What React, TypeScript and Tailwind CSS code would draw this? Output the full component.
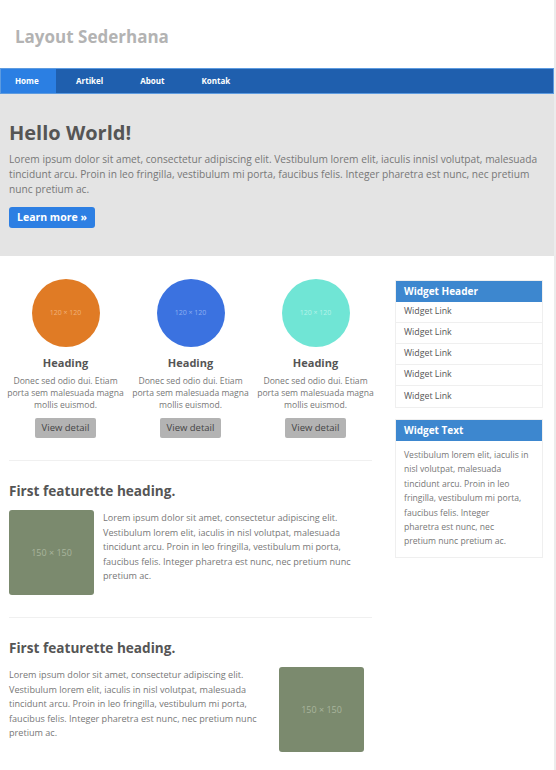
const links = ["Home", "Artikel", "About", "Kontak"];

const cards = [
  { color: "bg-[#e07b25]", text: "text-[#f0b27a]" },
  { color: "bg-[#3b72e0]", text: "text-[#8fb0f0]" },
  { color: "bg-[#70e5d5]", text: "text-[#b5f3ea]" },
];

const lorem =
  "Lorem ipsum dolor sit amet, consectetur adipiscing elit. Vestibulum lorem elit, iaculis in nisl volutpat, malesuada tincidunt arcu. Proin in leo fringilla, vestibulum mi porta, faucibus felis. Integer pharetra est nunc, nec pretium nunc pretium ac.";

function Placeholder() {
  return (
    <div className="w-[85px] h-[85px] shrink-0 rounded-[3px] bg-[#7b8a6e] flex items-center justify-center text-[9px] text-[#a9b59d]">
      150 × 150
    </div>
  );
}

export default function App() {
  return (
    <div
      className="min-h-screen bg-[#ececec] text-[#555]"
      style={{ fontFamily: '"Open Sans", "Liberation Sans", sans-serif' }}
    >
      <div className="w-[554px] min-h-screen bg-white">
        {/* Header */}
        <header className="h-[68px] flex items-end pb-[23px] pl-[15px]">
          <h1 className="text-[17px] font-bold text-[#b3b3b3] leading-none">
            Layout Sederhana
          </h1>
        </header>

        {/* Nav */}
        <nav className="h-[26px] bg-[#1f5fae] border border-[#5d9be0] flex">
          {links.map((l, i) => (
            <a
              key={l}
              className={`${
                i === 0 ? "bg-[#2b7fe3] w-[55px] pl-[14px]" : "pl-[20px] pr-[17px]"
              } h-full flex items-center text-[8px] font-bold text-white`}
            >
              {l}
            </a>
          ))}
        </nav>

        {/* Hero */}
        <section className="bg-[#e4e4e4] h-[162px] px-[9px] pt-[24px]">
          <h2 className="text-[20px] font-bold text-[#555] leading-[30px]">
            Hello World!
          </h2>
          <p className="mt-[4px] text-[10.2px] leading-[15px] text-[#777]">
            Lorem ipsum dolor sit amet, consectetur adipiscing elit. Vestibulum lorem elit,
            iaculis innisl volutpat, malesuada tincidunt arcu. Proin in leo fringilla,
            vestibulum mi porta, faucibus felis. Integer pharetra est nunc, nec pretium nunc
            pretium ac.
          </p>
          <button className="mt-[10px] h-[21px] px-[8px] rounded-[3px] bg-[#2d7fe3] text-white text-[10.5px] font-bold">
            Learn more »
          </button>
        </section>

        {/* Body */}
        <div className="flex px-[9px] pt-[23px] gap-[23px]">
          <main className="w-[363px]">
            <div className="grid grid-cols-3 -mx-[6px]">
              {cards.map((c, i) => (
                <div key={i} className="flex flex-col items-center">
                  <div
                    className={`w-[68px] h-[68px] rounded-full ${c.color} flex items-center justify-center text-[7px] ${c.text}`}
                  >
                    120 × 120
                  </div>
                  <h3 className="mt-[8px] text-[11px] font-bold text-[#555] leading-[16px]">
                    Heading
                  </h3>
                  <p className="mt-[4px] w-[118px] text-center text-[8.6px] leading-[12px] text-[#777]">
                    Donec sed odio dui. Etiam porta sem malesuada magna mollis euismod.
                  </p>
                  <button className="mt-[7px] h-[20px] px-[7px] rounded-[2px] bg-[#b3b3b3] text-[9.5px] text-[#444]">
                    View detail
                  </button>
                </div>
              ))}
            </div>

            <hr className="mt-[22px] border-[#f0f0f0]" />

            <h3 className="mt-[21px] text-[13.6px] font-bold text-[#555] leading-[18px]">
              First featurette heading.
            </h3>
            <div className="mt-[10px] flex gap-[9px]">
              <Placeholder />
              <p className="mt-[1px] text-[9.1px] leading-[14.5px] text-[#777] w-[254px]">
                {lorem}
              </p>
            </div>

            <hr className="mt-[22px] border-[#f0f0f0]" />

            <h3 className="mt-[21px] text-[13.6px] font-bold text-[#555] leading-[18px]">
              First featurette heading.
            </h3>
            <div className="mt-[10px] flex justify-between">
              <p className="mt-[1px] text-[9.1px] leading-[14.5px] text-[#777] w-[254px]">
                {lorem}
              </p>
              <div className="mr-[8px]">
                <Placeholder />
              </div>
            </div>
          </main>

          {/* Sidebar */}
          <aside className="w-[148px] pt-[1px]">
            <div className="border border-[#efefef]">
              <div className="h-[21px] bg-[#3d87cf] px-[8px] flex items-center text-[10px] font-bold text-white">
                Widget Header
              </div>
              {Array.from({ length: 5 }).map((_, i) => (
                <div
                  key={i}
                  className={`h-[21px] px-[8px] flex items-center text-[8.8px] text-[#555] ${
                    i < 4 ? "border-b border-[#efefef]" : ""
                  }`}
                >
                  Widget Link
                </div>
              ))}
            </div>

            <div className="mt-[11px] border border-[#efefef]">
              <div className="h-[21px] bg-[#3d87cf] px-[8px] flex items-center text-[10px] font-bold text-white">
                Widget Text
              </div>
              <p className="px-[8px] pt-[7px] pb-[8px] text-[8.6px] leading-[14.4px] text-[#777]">
                Vestibulum lorem elit, iaculis in nisl volutpat, malesuada tincidunt arcu.
                Proin in leo fringilla, vestibulum mi porta, faucibus felis. Integer
                <br />
                pharetra est nunc, nec
                <br />
                pretium nunc pretium ac.
              </p>
            </div>
          </aside>
        </div>
      </div>
    </div>
  );
}
